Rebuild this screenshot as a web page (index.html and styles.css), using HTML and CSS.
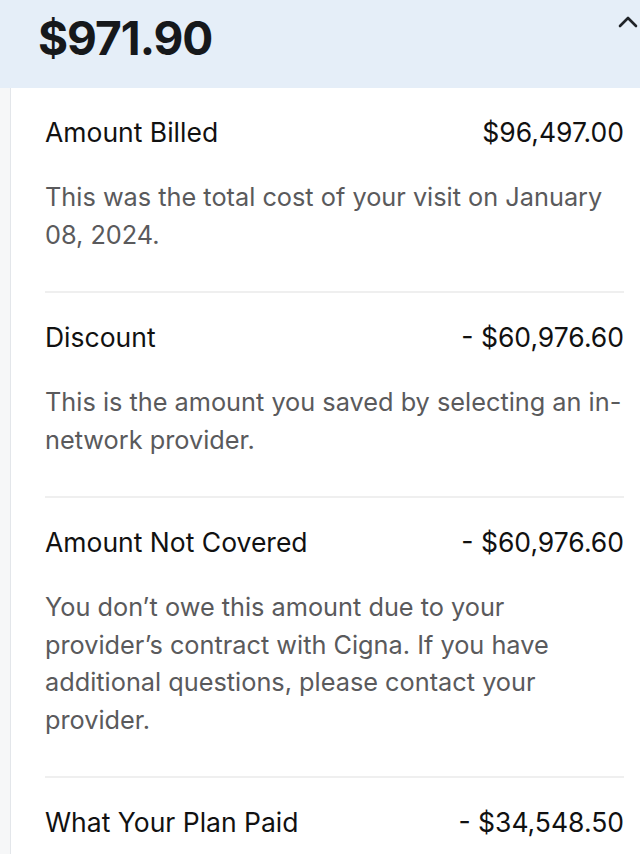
FILE: index.html
```html
<!DOCTYPE html>
<html lang="en">
<head>
<meta charset="utf-8">
<title>Claim details</title>
<link rel="stylesheet" href="styles.css">
</head>
<body>
<div class="header">
  <div class="total">$971.90</div>
  <svg class="chevron" width="22" height="14" viewBox="0 0 22 14" aria-hidden="true">
    <polyline points="3,11 11,3 19,11" fill="none" stroke="#1f2328" stroke-width="2.6" stroke-linecap="round" stroke-linejoin="round"/>
  </svg>
</div>
<div class="panel">
  <div class="section">
    <div class="row"><span class="label">Amount Billed</span><span class="amount">$96,497.00</span></div>
    <p class="desc">This was the total cost of your visit on January 08, 2024.</p>
  </div>
  <div class="section">
    <div class="row"><span class="label">Discount</span><span class="amount">- $60,976.60</span></div>
    <p class="desc">This is the amount you saved by selecting an in-network provider.</p>
  </div>
  <div class="section">
    <div class="row"><span class="label">Amount Not Covered</span><span class="amount">- $60,976.60</span></div>
    <p class="desc">You don’t owe this amount due to your provider’s contract with Cigna. If you have additional questions, please contact your provider.</p>
  </div>
  <div class="section last">
    <div class="row"><span class="label">What Your Plan Paid</span><span class="amount">- $34,548.50</span></div>
  </div>
</div>
</body>
</html>
```

FILE: styles.css
```css
html, body {
  margin: 0;
  padding: 0;
}
body {
  background: #f6f7f8;
  font-family: Inter, "Liberation Sans", Arial, sans-serif;
  color: #111111;
  width: 640px;
  height: 854px;
  overflow: hidden;
}
.header {
  height: 88px;
  background: #e5eef8;
  display: flex;
  align-items: center;
  justify-content: space-between;
  padding: 0 1px 0 38px;
  box-sizing: border-box;
}
.total {
  font-size: 46px;
  font-weight: 700;
  letter-spacing: -1px;
  color: #16181b;
  margin-top: -12px;
}
.chevron {
  align-self: flex-start;
  margin-top: 15px;
}
.panel {
  margin-left: 10px;
  border-left: 1px solid #e3e6ea;
  background: #ffffff;
  padding: 0 16px 0 34px;
  min-height: 766px;
}
.section {
  padding: 28px 0 38px;
  border-bottom: 2px solid #efefef;
}
.section.last {
  border-bottom: none;
}
.row {
  display: flex;
  justify-content: space-between;
  align-items: center;
  line-height: 32px;
  font-size: 26.5px;
  color: #111111;
}
.desc {
  margin: 30px 0 0;
  font-size: 25.3px;
  line-height: 37.5px;
  color: #5a5a5c;
}
```
